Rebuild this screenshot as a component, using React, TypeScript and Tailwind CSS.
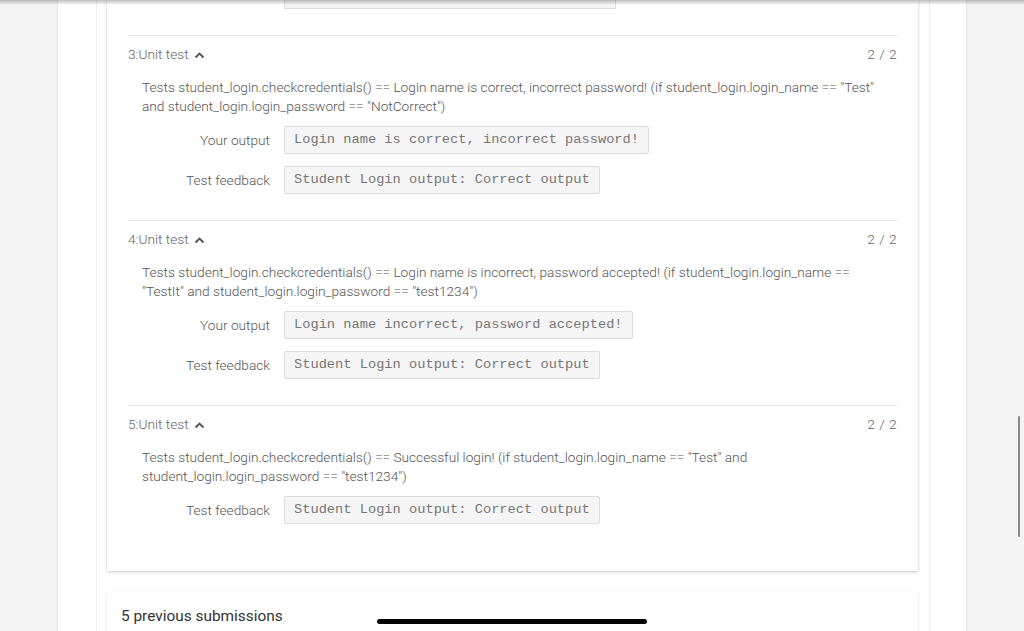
import React from "react";

type Row = { label: string; value: string };

interface UnitTest {
  n: number;
  desc: string[];
  rows: Row[];
}

const FEEDBACK = "Student Login output: Correct output";

const tests: UnitTest[] = [
  {
    n: 3,
    desc: [
      'Tests student_login.checkcredentials() == Login name is correct, incorrect password! (if student_login.login_name == "Test"',
      'and student_login.login_password == "NotCorrect")',
    ],
    rows: [
      { label: "Your output", value: "Login name is correct, incorrect password!" },
      { label: "Test feedback", value: FEEDBACK },
    ],
  },
  {
    n: 4,
    desc: [
      "Tests student_login.checkcredentials() == Login name is incorrect, password accepted! (if student_login.login_name ==",
      '"TestIt" and student_login.login_password == "test1234")',
    ],
    rows: [
      { label: "Your output", value: "Login name incorrect, password accepted!" },
      { label: "Test feedback", value: FEEDBACK },
    ],
  },
  {
    n: 5,
    desc: [
      'Tests student_login.checkcredentials() == Successful login! (if student_login.login_name == "Test" and',
      'student_login.login_password == "test1234")',
    ],
    rows: [{ label: "Test feedback", value: FEEDBACK }],
  },
];

function ChevronUp() {
  return (
    <svg width="11" height="10" viewBox="0 0 11 10" className="ml-[5px] mt-[1px]">
      <path d="M1.5 7.5 L5.5 3.5 L9.5 7.5" fill="none" stroke="#555" strokeWidth="1.9" />
    </svg>
  );
}

function OutputBox({ value }: { value: string }) {
  return (
    <div className="h-[28px] flex items-center px-[9px] bg-[#f5f5f5] border border-[#dcdcdc] rounded-[2px] font-['Courier_New','Liberation_Mono',monospace] text-[13.7px] text-[#777] whitespace-pre">
      {value}
    </div>
  );
}

function TestSection({ t, last }: { t: UnitTest; last: boolean }) {
  return (
    <div className={`border-t border-[#e6e6e6] pt-[9px] ${last ? "pb-[47px]" : "pb-[26px]"}`}>
      <div className="flex items-center justify-between h-[18px] text-[13.7px] text-[#666] font-light">
        <div className="flex items-center">
          {t.n}:Unit test
          <ChevronUp />
        </div>
        <div className="tracking-[0.5px]">2 / 2</div>
      </div>
      <div className="mt-[15px] pl-[14px] text-[13.7px] leading-[19px] text-[#555] font-light">
        {t.desc.map((l, i) => (
          <div key={i}>{l}</div>
        ))}
      </div>
      <div className="mt-[10px] flex flex-col gap-[12px]">
        {t.rows.map((r, i) => (
          <div key={i} className="flex items-center">
            <div className="w-[142px] text-right text-[13.7px] text-[#555] font-light">{r.label}</div>
            <div className="ml-[14px]">
              <OutputBox value={r.value} />
            </div>
          </div>
        ))}
      </div>
    </div>
  );
}

export default function App() {
  return (
    <div className="relative h-[631px] overflow-hidden bg-[#f3f3f3] font-['Roboto','Liberation_Sans',sans-serif]">
      <div className="ml-[57px] w-[910px] h-full bg-white border-l border-r border-[#e9e9e9] pl-[38px] pr-[36px]">
        <div className="h-full border-l border-r border-[#eeeeee] pl-[10px] pr-[11px]">
          <div className="bg-white shadow-[0_1px_3px_rgba(0,0,0,0.22)] px-[21px]">
            <div className="h-[35px] pl-[156px]">
              <div className="w-[332px] h-[9px] bg-[#f5f5f5] border-l border-r border-b border-[#dcdcdc]" />
            </div>
            {tests.map((t, i) => (
              <TestSection key={t.n} t={t} last={i === tests.length - 1} />
            ))}
          </div>
          <div className="mt-[21px] bg-white shadow-[0_1px_3px_rgba(0,0,0,0.12)] px-[14px] pt-[13px] h-[60px]">
            <div className="text-[15.4px] text-[#333]">5 previous submissions</div>
          </div>
        </div>
      </div>

      {/* shadow of the fixed bar above */}
      <div className="absolute top-0 left-0 right-0 h-[5px] bg-gradient-to-b from-[rgba(0,0,0,0.25)] to-transparent" />
      {/* scrollbar thumb */}
      <div className="absolute left-[1018px] top-[416px] w-[2px] h-[121px] bg-[#888] rounded-full" />
      {/* home indicator */}
      <div className="absolute left-[377px] top-[619px] w-[270px] h-[5px] bg-black rounded-full" />
    </div>
  );
}
